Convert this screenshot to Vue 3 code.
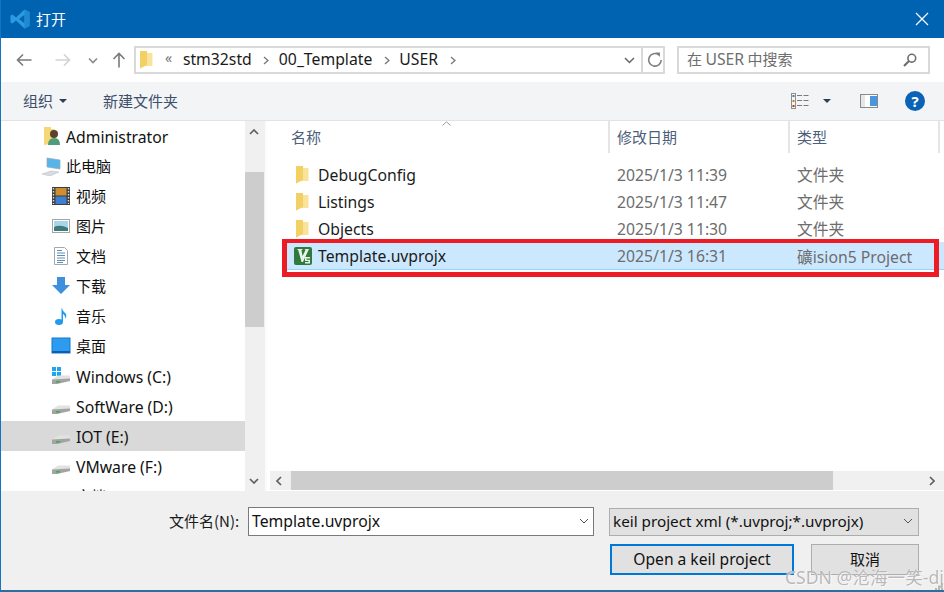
<script setup>
const navItems = [
  { label: '', latin: 'Administrator', icon: 'user', indent: 43, gap: 2 },
  { label: '此电脑', latin: '', icon: 'pc', indent: 41, gap: 4 },
  { label: '视频', latin: '', icon: 'video', indent: 50 },
  { label: '图片', latin: '', icon: 'picture', indent: 50 },
  { label: '文档', latin: '', icon: 'doc', indent: 50 },
  { label: '下载', latin: '', icon: 'download', indent: 50 },
  { label: '音乐', latin: '', icon: 'music', indent: 50 },
  { label: '桌面', latin: '', icon: 'desktop', indent: 50 },
  { label: '', latin: 'Windows (C:)', icon: 'windrive', indent: 50 },
  { label: '', latin: 'SoftWare (D:)', icon: 'drive', indent: 50 },
  { label: '', latin: 'IOT (E:)', icon: 'drive', indent: 50, active: true },
  { label: '', latin: 'VMware (F:)', icon: 'drive', indent: 50 },
  { label: '文档', latin: ' (G:)', icon: 'drive', indent: 50 }
]
const files = [
  { name: 'DebugConfig', date: '2025/1/3 11:39', type: '文件夹', folder: true },
  { name: 'Listings', date: '2025/1/3 11:47', type: '文件夹', folder: true },
  { name: 'Objects', date: '2025/1/3 11:30', type: '文件夹', folder: true },
  { name: 'Template.uvprojx', date: '2025/1/3 16:31', type: '礦ision5 Project', selected: true }
]
</script>

<template>
  <div class="dialog">
    <header class="title">
      <svg class="vs" width="20" height="20" viewBox="0 0 20 20">
        <path d="M14.5 0.5 L19.5 3 V17 L14.5 19.5 L6 11.6 L2.4 14.6 L0.5 13.6 V6.4 L2.4 5.4 L6 8.4 Z M14.5 5.8 L9 10 L14.5 14.2 Z" fill="#2a9be0" fill-rule="evenodd"/>
        <path d="M14.5 0.5 L19.5 3 V17 L14.5 19.5 Z" fill="#1f8ad2"/>
      </svg>
      <span class="title-text">打开</span>
      <svg class="close" width="14" height="14" viewBox="0 0 14 14"><path d="M1 1 L13 13 M13 1 L1 13" stroke="#fff" stroke-width="1.2"/></svg>
    </header>

    <div class="nav">
      <svg class="ic back" width="16" height="14" viewBox="0 0 16 14"><path d="M15.5 7 H1.5 M7 1.5 L1.5 7 L7 12.5" fill="none" stroke="#7a7a7a" stroke-width="1.6"/></svg>
      <svg class="ic fwd" width="16" height="14" viewBox="0 0 16 14"><path d="M0.5 7 H14.5 M9 1.5 L14.5 7 L9 12.5" fill="none" stroke="#d2d2d2" stroke-width="1.6"/></svg>
      <svg class="ic drop" width="10" height="7" viewBox="0 0 10 7"><path d="M1 1.5 L5 5.5 L9 1.5" fill="none" stroke="#8a8a8a" stroke-width="1.6"/></svg>
      <svg class="ic up" width="14" height="16" viewBox="0 0 14 16"><path d="M7 15.5 V1.5 M1.5 7 L7 1.5 L12.5 7" fill="none" stroke="#7a7a7a" stroke-width="1.6"/></svg>
      <div class="crumbs">
        <svg class="crumb-folder" width="13" height="18" viewBox="0 0 13 18">
          <path d="M0 0 H7 V2 H12.5 V15 H3 L0 17.5 Z" fill="#f9e39b"/><path d="M0 0 H7 V14 L0 17.5 Z" fill="#f3d063"/>
        </svg>
        <span class="chev2">«</span>
        <span class="crumb c1">stm32std</span>
        <svg class="sep s1" width="6" height="9" viewBox="0 0 6 9"><path d="M1 1 L5 4.5 L1 8" fill="none" stroke="#777" stroke-width="1.3"/></svg>
        <span class="crumb c2">00_Template</span>
        <svg class="sep s2" width="6" height="9" viewBox="0 0 6 9"><path d="M1 1 L5 4.5 L1 8" fill="none" stroke="#777" stroke-width="1.3"/></svg>
        <span class="crumb c3">USER</span>
        <svg class="sep s3" width="6" height="9" viewBox="0 0 6 9"><path d="M1 1 L5 4.5 L1 8" fill="none" stroke="#777" stroke-width="1.3"/></svg>
        <svg class="crumb-drop" width="11" height="7" viewBox="0 0 11 7"><path d="M1 1 L5.5 5.5 L10 1" fill="none" stroke="#666" stroke-width="1.5"/></svg>
        <span class="crumb-div"></span>
        <svg class="refresh" width="16" height="16" viewBox="0 0 16 16"><path d="M11.8 2.8 A6.3 6.3 0 1 0 14.3 8" fill="none" stroke="#808080" stroke-width="1.6"/><path d="M8.5 0.5 H13 V5 Z" fill="#808080"/></svg>
      </div>
      <div class="search">
        <span class="search-text">在 <i class="up-l">USER</i> 中搜索</span>
        <svg width="14" height="14" viewBox="0 0 14 14"><circle cx="8.8" cy="5.2" r="3.9" fill="none" stroke="#6d6d6d" stroke-width="1.6"/><path d="M6 8 L1 13" stroke="#6d6d6d" stroke-width="2.2"/></svg>
      </div>
    </div>

    <div class="toolbar">
      <span class="tool org">组织</span>
      <svg class="caret" width="8" height="4" viewBox="0 0 8 4"><path d="M0 0 H8 L4 4 Z" fill="#2b3f5c"/></svg>
      <span class="tool newf">新建文件夹</span>
      <span class="spacer"></span>
      <svg class="view" width="18" height="16" viewBox="0 0 18 16">
        <rect x="0.5" y="0.5" width="4" height="15" fill="#f5f5f5" stroke="#8f8f8f"/>
        <rect x="1.5" y="2" width="2" height="2" fill="#3a7f9f"/><rect x="1.5" y="7" width="2" height="2" fill="#b28f1c"/><rect x="1.5" y="12" width="2" height="2" fill="#b23a1c"/>
        <path d="M6 2.5 H18 M6 7.5 H18 M6 12.5 H18" stroke="#7a7a7a" stroke-dasharray="5 1.5"/>
      </svg>
      <svg class="caret2" width="8" height="4" viewBox="0 0 8 4"><path d="M0 0 H8 L4 4 Z" fill="#2b3f5c"/></svg>
      <svg class="pane-ic" width="18" height="14" viewBox="0 0 18 14">
        <rect x="0.5" y="0.5" width="17" height="13" fill="#fff" stroke="#8a8a8a"/><rect x="1" y="1" width="4" height="12" fill="#e6e6e6"/><rect x="10" y="2" width="7" height="10" fill="#4a95e0"/>
      </svg>
      <span class="help">?</span>
    </div>

    <main class="main">
      <nav class="tree">
        <div v-for="item in navItems" :key="item.label + item.latin" class="tree-row" :class="{ active: item.active }" :style="{ paddingLeft: item.indent + 'px' }">
          <svg width="20" height="20" viewBox="0 0 20 20" class="tree-ic">
            <template v-if="item.icon === 'user'">
              <path d="M0 1 H7 V3 H11 V17 L0 19 Z" fill="#f5d778"/><circle cx="10" cy="8" r="4" fill="#5b4230"/><path d="M4 19 Q4 12 10.5 12 Q16 12 16 19 Z" fill="#4f9d78"/>
            </template>
            <template v-else-if="item.icon === 'pc'">
              <path d="M5 2 L18 4 V13 L5 11 Z" fill="#58b5ea" stroke="#9aa8b2" stroke-width=".7"/><path d="M0 18 L9 15 L17 16 L8 20 Z" fill="#d8dce0" stroke="#aab" stroke-width=".4"/>
            </template>
            <template v-else-if="item.icon === 'video'">
              <rect x="1" y="1" width="18" height="18" fill="#3d3d3d"/><rect x="4.5" y="2" width="11" height="7.5" fill="#cf8f2f"/><rect x="4.5" y="10.5" width="11" height="7.5" fill="#3f7fd0"/>
              <path d="M2.5 2 V18 M17.5 2 V18" stroke="#ddd" stroke-width="1.4" stroke-dasharray="1.5 1.5"/>
            </template>
            <template v-else-if="item.icon === 'picture'">
              <rect x="1.5" y="3.5" width="17" height="13" fill="#fff" stroke="#a5a5a5"/><rect x="3" y="5" width="14" height="10" fill="#a9d4ec"/><path d="M3 11 Q9 8 17 12 V15 H3 Z" fill="#3f7a78"/>
            </template>
            <template v-else-if="item.icon === 'doc'">
              <path d="M3.5 1.5 H13.5 L16.5 4.5 V18.5 H3.5 Z" fill="#fff" stroke="#a8a8a8"/><path d="M6 4.5 H11 M6 7 H14 M6 9.5 H14 M6 12 H14 M6 14.5 H14 M6 16.5 H12" stroke="#5d8fb5"/>
            </template>
            <template v-else-if="item.icon === 'download'">
              <path d="M6 1 H14 V9 H19 L10 18 L1 9 H6 Z" fill="#3c90dd"/>
            </template>
            <template v-else-if="item.icon === 'music'">
              <ellipse cx="8" cy="16" rx="4" ry="3" fill="#1f9cf0"/><path d="M10.5 16 V1.5 Q12 6 15 8 Q16 10 14.5 13 Q14 9 12 8 V16 Z" fill="#1f9cf0"/>
            </template>
            <template v-else-if="item.icon === 'desktop'">
              <rect x="1" y="2" width="18" height="15" fill="#2d9bf0" stroke="#1678c8"/><rect x="1" y="15" width="18" height="2" fill="#0f5fb0"/>
            </template>
            <template v-else>
              <path v-if="item.icon === 'windrive'" d="M1 1 H5 V5 H1 Z M6 1 H10 V5 H6 Z M1 6 H5 V10 H1 Z M6 6 H10 V10 H6 Z" fill="#19a7ee"/>
              <path d="M1 13.5 L7 9.5 H19 V13 L5 15 Z" fill="#e2e2e2"/><path d="M1 13.5 L19 12.5 V15 L6 18 H1 Z" fill="#a3a3a3"/><rect x="5" y="15" width="4" height="1.6" fill="#3fae4b"/>
            </template>
          </svg>
          <span class="tree-label" :style="{ marginLeft: (item.gap || 5) + 'px' }"><span v-if="item.label" class="cjk">{{ item.label }}</span><span v-if="item.latin" class="lat">{{ item.latin }}</span></span>
        </div>
      </nav>

      <div class="tree-scroll">
        <svg class="sa" width="10" height="6" viewBox="0 0 10 6"><path d="M1 5 L5 1 L9 5" fill="none" stroke="#606060" stroke-width="1.7"/></svg>
        <div class="tree-thumb"></div>
        <span class="spacer"></span>
        <svg class="sa sb" width="10" height="6" viewBox="0 0 10 6"><path d="M1 1 L5 5 L9 1" fill="none" stroke="#606060" stroke-width="1.7"/></svg>
      </div>
      <div class="split"></div>

      <section class="pane">
        <div class="head">
          <div class="hc h1">名称<svg class="sort" width="9" height="5" viewBox="0 0 9 5"><path d="M0.5 4.5 L4.5 0.8 L8.5 4.5" fill="none" stroke="#9a9a9a"/></svg></div>
          <div class="hc h2">修改日期</div>
          <div class="hc h3">类型</div>
        </div>
        <div class="list">
          <div v-for="f in files" :key="f.name" class="file" :class="{ sel: f.selected }">
            <span class="file-ic">
              <svg v-if="f.folder" width="13" height="18" viewBox="0 0 13 18">
                <path d="M0 0 H7 V2 H12.5 V15 H3 L0 17.5 Z" fill="#f9e39b"/><path d="M0 0 H7 V14 L0 17.5 Z" fill="#f3d063"/>
              </svg>
              <svg v-else width="18" height="18" viewBox="0 0 18 18">
                <rect width="18" height="18" rx="2" fill="#2f7a3c"/><path d="M3 2 H9 L7.5 3.2 L8.5 9 L11.5 3 L10.5 2 H15 L9 15 H7.5 L4.3 3.2 Z" fill="#e8f2e6"/><path d="M11 10 H16 V11.5 H12.5 V12.8 H16 V16.5 H11 V15 H14.5 V14 H11 Z" fill="#e8f2e6"/>
              </svg>
            </span>
            <span class="fname">{{ f.name }}</span>
            <span class="fdate">{{ f.date }}</span>
            <span class="ftype">{{ f.type }}</span>
          </div>
        </div>
        <div class="hscroll">
          <svg class="ha" width="6" height="10" viewBox="0 0 6 10"><path d="M5 1 L1 5 L5 9" fill="none" stroke="#606060" stroke-width="1.7"/></svg>
          <div class="hthumb"></div>
          <svg class="hb" width="6" height="10" viewBox="0 0 6 10"><path d="M1 1 L5 5 L1 9" fill="none" stroke="#606060" stroke-width="1.7"/></svg>
        </div>
      </section>
    </main>

    <footer class="bottom">
      <div class="row1">
        <label class="fn-label">文件名(N):</label>
        <div class="fn-input">
          <span>Template.uvprojx</span>
          <svg width="10" height="6" viewBox="0 0 10 6"><path d="M1 1 L5 5 L9 1" fill="none" stroke="#555"/></svg>
        </div>
        <div class="filter">
          <span>keil project xml (*.uvproj;*.uvprojx)</span>
          <svg width="10" height="6" viewBox="0 0 10 6"><path d="M1 1 L5 5 L9 1" fill="none" stroke="#555"/></svg>
        </div>
      </div>
      <div class="row2">
        <button class="btn primary"><span>Open a keil project</span></button>
        <button class="btn cancel"><span>取消</span></button>
      </div>
    </footer>

    <div class="redbox"></div>
    <div class="watermark">CSDN @沧海一笑-dj</div>
    <svg class="grip" width="9" height="7" viewBox="0 0 9 7"><path d="M7 0 H9 V2 H7 Z M4 2.5 H6 V4.5 H4 Z M7 2.5 H9 V4.5 H7 Z M1 5 H3 V7 H1 Z M4 5 H6 V7 H4 Z M7 5 H9 V7 H7 Z" fill="#b5b5b5"/></svg>
  </div>
</template>

<style>
html, body { margin: 0; padding: 0; background: #fff; }
</style>

<style scoped>
.dialog {
  width: 944px; height: 592px; box-sizing: border-box; position: relative; overflow: hidden;
  display: flex; flex-direction: column; background: #fff;
  border-left: 1px solid #1275c4;
  font-family: "Noto Sans", "Noto Sans CJK SC", sans-serif; font-size: 15.75px; color: #111;
}
.spacer { flex: 1; }
.title { height: 38px; flex: none; background: #0063b1; display: flex; align-items: center; color: #fff; }
.vs { margin-left: 9px; }
.title-text { margin-left: 6px; font-size: 15px; font-family: "Noto Sans CJK SC", sans-serif; flex: 1; padding-bottom: 2px; }
.close { margin-right: 15px; }

.nav { height: 44px; flex: none; display: flex; align-items: center; }
.back { margin-left: 15px; }
.fwd { margin-left: 23px; }
.drop { margin-left: 17px; }
.up { margin-left: 14px; }
.crumbs {
  margin-left: 8px; width: 531px; height: 28px; box-sizing: border-box; border: 2px solid #d9d9d9;
  display: flex; align-items: center; position: relative;
}
.crumb-folder { margin-left: 4px; }
.chev2 { margin-left: 12px; width: 8px; font-size: 14px; color: #777; line-height: 1; margin-top: -5px; }
.crumb { white-space: nowrap; font-size: 15.75px; color: #1a1a1a; margin-top: -2px; }
.c1 { margin-left: 10px; width: 68px; }
.s1 { margin-left: 12px; }
.c2 { margin-left: 10px; width: 94px; }
.s2 { margin-left: 12px; }
.c3 { margin-left: 9px; width: 40px; }
.s3 { margin-left: 11px; }
.crumb-drop { margin-left: 168px; }
.crumb-div { margin-left: 6px; width: 2px; height: 100%; background: #d9d9d9; }
.refresh { margin-left: 4px; }
.search {
  margin-left: 12px; width: 253px; height: 28px; box-sizing: border-box; border: 2px solid #d9d9d9;
  display: flex; align-items: center; justify-content: space-between; padding: 0 11px 0 8px;
}
.search-text { font-size: 15px; color: #6e6e6e; font-family: "Noto Sans CJK SC", sans-serif; margin-top: -2px; }
.up-l { font-style: normal; font-family: "Noto Sans", sans-serif; font-size: 15.75px; }

.toolbar { height: 39px; flex: none; background: #f3f4f6; display: flex; align-items: center; border-bottom: 1px solid #e3e3e3; box-sizing: border-box; }
.tool { font-size: 15px; color: #3c4f6b; font-family: "Noto Sans CJK SC", sans-serif; margin-top: -2px; }
.org { margin-left: 22px; }
.caret { margin-left: 6px; }
.newf { margin-left: 36px; }
.caret2 { margin-left: 14px; }
.pane-ic { margin-left: 29px; }
.help {
  margin-left: 27px; margin-right: 19px; width: 20px; height: 20px; border-radius: 50%;
  background: #0a63b4; color: #fff; font: 700 15px/20px "Noto Sans", sans-serif; text-align: center;
}

.main { height: 370px; flex: none; display: flex; }
.tree { width: 244px; flex: none; overflow: hidden; }
.tree-row { height: 30px; display: flex; align-items: center; box-sizing: border-box; }
.tree-row.active { background: #d9d9d9; }
.tree-ic { flex: none; }
.tree-label { white-space: pre; display: flex; align-items: center; }
.cjk { font: 15px "Noto Sans CJK SC", sans-serif; margin-top: -2px; }
.lat { font-size: 15.75px; margin-top: 2px; }
.tree-scroll { width: 20px; flex: none; background: #f0f0f0; display: flex; flex-direction: column; align-items: center; }
.sa { margin-top: 8px; flex: none; margin-left: -2px; }
.sb { margin: 0 0 7px -2px; }
.tree-thumb { align-self: stretch; margin: 37px 1px 0 0; height: 155px; background: #cdcdcd; }
.split { width: 2px; flex: none; background: #fbfbfb; }
.pane { flex: 1; display: flex; flex-direction: column; min-width: 0; }
.head { height: 32px; flex: none; display: flex; color: #4c607a; font-size: 15px; font-family: "Noto Sans CJK SC", sans-serif; }
.hc { box-sizing: border-box; line-height: 31px; padding-left: 7px; border-right: 2px solid #e5e5e5; position: relative; }
.h1 { width: 343px; padding-left: 24px; }
.h2 { width: 180px; }
.h3 { width: 150px; }
.sort { position: absolute; left: 175px; top: 0; }
.list { flex: 1; padding-top: 8px; }
.file { height: 27px; display: flex; align-items: center; font-size: 15.75px; }
.file.sel { background: #cce8ff; box-shadow: inset 0 -1px #99d1ff; margin-left: 20px; height: 28px; }
.file-ic { width: 51px; flex: none; padding-left: 29px; box-sizing: border-box; display: flex; }
.file.sel .file-ic { width: 31px; padding-left: 7px; }
.fname { width: 299px; flex: none; color: #1a1a1a; }
.fdate { width: 180px; flex: none; color: #6d6d6d; }
.ftype { color: #6d6d6d; white-space: nowrap; font-family: "Noto Sans", "Noto Sans CJK SC", sans-serif; }
.hscroll { height: 19px; flex: none; margin: 0 0 1px 3px; background: #f0f0f0; display: flex; align-items: center; }
.ha { margin-left: 6px; flex: none; }
.hthumb { margin-left: 9px; width: 542px; height: 100%; background: #cdcdcd; }
.hb { margin-left: 96px; flex: none; }

.bottom { flex: 1; background: #f0f0f0; border-bottom: 2px solid #2c6f9f; box-sizing: border-box; padding-top: 16px; }
.row1 { display: flex; align-items: center; height: 29px; }
.fn-label { margin-left: 168px; width: 79px; font: 15px "Noto Sans CJK SC", sans-serif; color: #1a1a1a; margin-top: -2px; }
.fn-input {
  width: 346px; height: 29px; box-sizing: border-box; border: 1px solid #7a7a7a; background: #fff;
  display: flex; align-items: center; justify-content: space-between; padding: 0 4px 2px 3px;
}
.filter {
  margin-left: 15px; width: 310px; height: 28px; box-sizing: border-box; border: 1px solid #adadad; background: #e1e1e1;
  display: flex; align-items: center; justify-content: space-between; padding: 0 5px 2px 3px; font-size: 15.25px;
}
.row2 { display: flex; margin-top: 8px; }
.btn { height: 31px; box-sizing: border-box; background: #e1e1e1; font-size: 15.6px; font-family: "Noto Sans", "Noto Sans CJK SC", sans-serif; color: #111; padding: 0 0 2px; }
.primary { margin-left: 609px; width: 184px; border: 2px solid #0078d7; }
.cancel { margin-left: 17px; width: 108px; border: 1px solid #adadad; font: 15px "Noto Sans CJK SC", sans-serif; }

.redbox { position: absolute; left: 281px; top: 239px; width: 657px; height: 38px; box-sizing: border-box; border: 5px solid #ed1c24; border-top-width: 4px; pointer-events: none; }
.watermark { position: absolute; left: 784px; top: 564px; font-size: 17.6px; white-space: nowrap; color: rgba(145,145,145,.65); text-shadow: 0 0 1px #fff, 1px 1px 0 rgba(255,255,255,.6); font-family: "Noto Sans", "Noto Sans CJK SC", sans-serif; }
.grip { position: absolute; right: 1px; bottom: 2px; }
</style>
